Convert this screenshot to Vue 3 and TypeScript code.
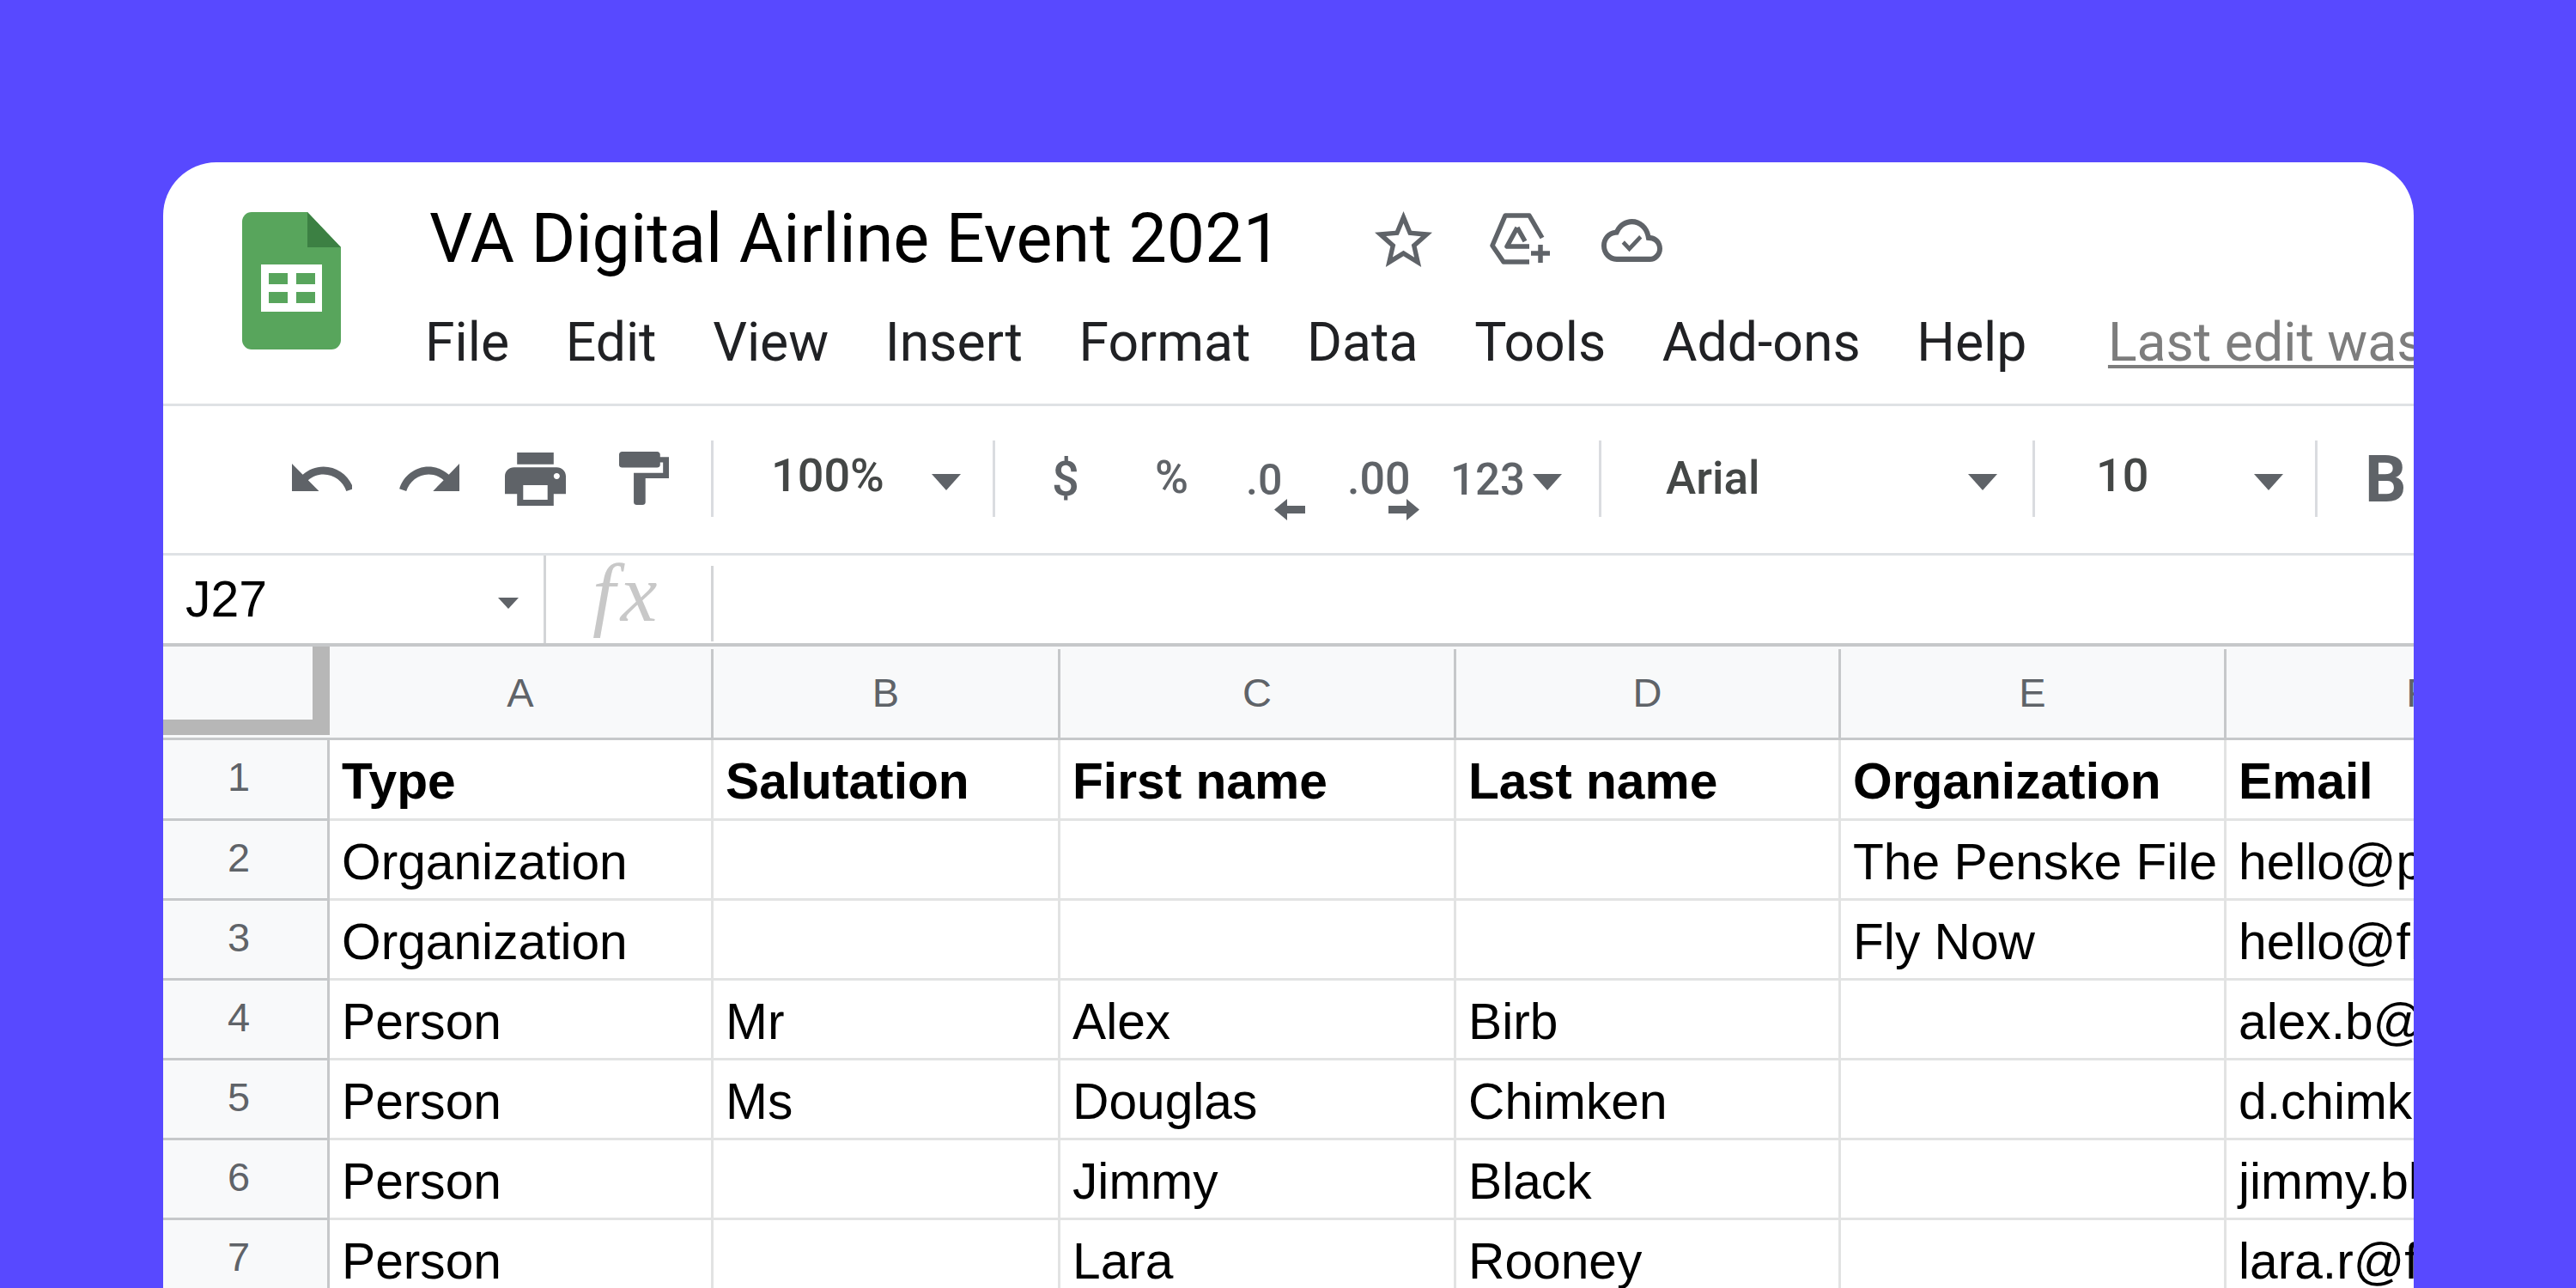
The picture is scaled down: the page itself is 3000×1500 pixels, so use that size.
<script setup lang="ts">
import { computed } from 'vue'

type Tool = {
  x: number
  kind: 'icon' | 'text' | 'caret' | 'sep'
  top?: number
  w?: number
  h?: number
  box?: string
  d?: string
  label?: string
  size?: number
  weight?: number
  color?: string
  arrow?: 'left' | 'right'
  arrowX?: number
}

const SHEET_TOP = 473

const rawTools: Tool[] = [
  { x: 340, kind: 'icon', top: 540, w: 70, h: 32, box: '2 7 20 9', d: 'M12.5 8c-2.65 0-5.05.99-6.9 2.6L2 7v9h9l-3.62-3.62c1.39-1.16 3.16-1.88 5.12-1.88 3.54 0 6.55 2.31 7.6 5.5l2.37-.78C21.08 11.03 17.15 8 12.5 8z' },
  { x: 465, kind: 'icon', top: 540, w: 70, h: 32, box: '1.5 7 20.5 9', d: 'M18.4 10.6C16.55 8.99 14.15 8 11.5 8c-4.65 0-8.58 3.03-9.96 7.22L3.9 16c1.05-3.19 4.05-5.5 7.6-5.5 1.95 0 3.73.72 5.12 1.88L13 16h9V7l-3.6 3.6z' },
  { x: 588, kind: 'icon', top: 527, w: 71, h: 62, box: '2 3 20 18', d: 'M19 8H5c-1.66 0-3 1.34-3 3v6h4v4h12v-4h4v-6c0-1.66-1.34-3-3-3zm-3 11H8v-5h8v5zm3-7c-.55 0-1-.45-1-1s.45-1 1-1 1 .45 1 1-.45 1-1 1zm-1-9H6v4h12V3z' },
  { x: 721, kind: 'icon', top: 526, w: 58, h: 62, box: '4 2 17 20', d: 'M18 4V3c0-.55-.45-1-1-1H5c-.55 0-1 .45-1 1v4c0 .55.45 1 1 1h12c.55 0 1-.45 1-1V6h1v4H9v11c0 .55.45 1 1 1h2c.55 0 1-.45 1-1v-9h8V4h-3z' },
  { x: 828, kind: 'sep' },
  { x: 898, kind: 'text', label: '100%', size: 54, top: 572, color: '#444746' },
  { x: 1085, kind: 'caret' },
  { x: 1156, kind: 'sep' },
  { x: 1225, kind: 'text', label: '$', size: 56, top: 577 },
  { x: 1345, kind: 'text', label: '%', size: 53, top: 575 },
  { x: 1451, kind: 'text', label: '.0', size: 50, top: 576, arrow: 'left', arrowX: 33 },
  { x: 1569, kind: 'text', label: '.00', size: 52, top: 576, arrow: 'right', arrowX: 48 },
  { x: 1689, kind: 'text', label: '123', size: 51, top: 576 },
  { x: 1785, kind: 'caret' },
  { x: 1862, kind: 'sep' },
  { x: 1940, kind: 'text', label: 'Arial', size: 53, top: 576, color: '#444746' },
  { x: 2292, kind: 'caret' },
  { x: 2367, kind: 'sep' },
  { x: 2441, kind: 'text', label: '10', size: 54, top: 572, color: '#444746' },
  { x: 2625, kind: 'caret' },
  { x: 2696, kind: 'sep' },
  { x: 2754, kind: 'text', label: 'B', size: 76, top: 584, weight: 700 },
]

// Every slot runs up to the start of the next one, so the row is laid out by flow.
const tools = computed(() =>
  rawTools.map((t, i) => {
    const next = rawTools[i + 1]
    const width = next ? next.x - t.x : 60
    let paddingTop = 0
    if (t.kind === 'text') paddingTop = (t.top as number) - SHEET_TOP - 0.841 * (t.size as number)
    else if (t.kind === 'icon') paddingTop = (t.top as number) - SHEET_TOP
    return { ...t, slot: { width: width + 'px', paddingTop: paddingTop + 'px' } }
  }),
)

const menu = ['File', 'Edit', 'View', 'Insert', 'Format', 'Data', 'Tools', 'Add-ons', 'Help']
const columns = ['A', 'B', 'C', 'D', 'E', 'F']
const rows: string[][] = [
  ['Type', 'Salutation', 'First name', 'Last name', 'Organization', 'Email'],
  ['Organization', '', '', '', 'The Penske File', 'hello@penskefile.com'],
  ['Organization', '', '', '', 'Fly Now', 'hello@flynow.com'],
  ['Person', 'Mr', 'Alex', 'Birb', '', 'alex.b@flynow.com'],
  ['Person', 'Ms', 'Douglas', 'Chimken', '', 'd.chimken@flynow.com'],
  ['Person', '', 'Jimmy', 'Black', '', 'jimmy.black@flynow.com'],
  ['Person', '', 'Lara', 'Rooney', '', 'lara.r@flynow.com'],
]
</script>

<template>
  <div class="page">
    <main class="card">
      <header class="head">
        <svg class="logo" viewBox="0 0 115 160" width="115" height="160">
          <path d="M11 0H76L115 41V149a11 11 0 0 1-11 11H11A11 11 0 0 1 0 149V11A11 11 0 0 1 11 0Z" fill="#58a55c" />
          <path d="M76 0V41H115Z" fill="#3c8043" />
          <rect x="22" y="61" width="71" height="55" fill="#fff" />
          <rect x="31" y="71" width="22" height="13" fill="#58a55c" />
          <rect x="63" y="71" width="22" height="13" fill="#58a55c" />
          <rect x="31" y="93" width="22" height="13" fill="#58a55c" />
          <rect x="63" y="93" width="22" height="13" fill="#58a55c" />
        </svg>
        <div class="head-text">
          <div class="title-row">
            <h1 class="title">VA Digital Airline Event 2021</h1>
            <svg class="star" viewBox="2 2 20 19" width="67" height="65" preserveAspectRatio="none">
              <path fill="#5f6368" d="M22 9.24l-7.19-.62L12 2 9.19 8.63 2 9.24l5.46 4.73L5.82 21 12 17.27 18.18 21l-1.63-7.03L22 9.24zM12 15.4l-3.76 2.27 1-4.28-3.32-2.88 4.38-.38L12 6.1l1.71 4.04 4.38.38-3.32 2.88 1 4.28L12 15.4z" />
            </svg>
            <svg class="drive" viewBox="0 0 70 60" width="70" height="60">
              <path fill="none" stroke="#5f6368" stroke-width="5.5" stroke-linejoin="round" d="M61 29L46 3H18L3 38L16 57H46M32 17L20 39H46M32 17L41 33" />
              <path fill="none" stroke="#5f6368" stroke-width="5.5" d="M48 47H70M59 37V58" />
            </svg>
            <svg class="cloud" viewBox="0 4 24 16" width="71" height="50" preserveAspectRatio="none">
              <path fill="#5f6368" d="M19.35 10.04C18.67 6.59 15.64 4 12 4 9.11 4 6.6 5.64 5.35 8.04 2.34 8.36 0 10.91 0 14c0 3.31 2.69 6 6 6h13c2.76 0 5-2.24 5-5 0-2.64-2.05-4.78-4.65-4.96zM19 18H6c-2.21 0-4-1.79-4-4 0-2.05 1.53-3.76 3.56-3.97l1.07-.11.5-.95C8.08 7.14 9.94 6 12 6c2.62 0 4.88 1.86 5.39 4.43l.3 1.5 1.53.11c1.56.1 2.78 1.41 2.78 2.96 0 1.65-1.35 3-3 3z" />
              <path fill="#5f6368" d="M11 16.2l-3-3 1.1-1.1 1.9 1.9 3.9-3.9 1.1 1.1z" />
            </svg>
          </div>
          <nav class="menu">
            <span v-for="m in menu" :key="m" class="menu-item">{{ m }}</span>
            <span class="last-edit">Last edit was</span>
          </nav>
        </div>
      </header>

      <section class="toolbar">
        <div v-for="(t, i) in tools" :key="i" class="slot" :style="t.slot">
          <svg v-if="t.kind === 'icon'" :viewBox="t.box" :width="t.w" :height="t.h" preserveAspectRatio="none">
            <path fill="#5f6368" :d="t.d" />
          </svg>
          <span
            v-else-if="t.kind === 'text'"
            class="tool-text"
            :style="{ fontSize: t.size + 'px', fontWeight: t.weight ?? 500, color: t.color ?? '#5f6368' }"
          >
            {{ t.label }}
            <svg
              v-if="t.arrow"
              class="dec-arrow"
              :style="{ left: t.arrowX + 'px' }"
              viewBox="0 0 36 25"
              width="36"
              height="25"
            >
              <path v-if="t.arrow === 'left'" fill="#5f6368" d="M0 12.5L15 0V8H36V17H15V25Z" />
              <path v-else fill="#5f6368" d="M36 12.5L21 0V8H0V17H21V25Z" />
            </svg>
          </span>
          <i v-else-if="t.kind === 'caret'" class="caret"></i>
          <i v-else class="sep"></i>
        </div>
      </section>

      <section class="formula">
        <div class="name-box">
          <span class="name">J27</span>
          <i class="name-caret"></i>
        </div>
        <div class="fx-box"><span class="fx">fx</span></div>
      </section>

      <section class="sheet">
        <div class="corner"><div class="corner-inner"></div></div>
        <div v-for="c in columns" :key="c" class="col-head">{{ c }}</div>
        <template v-for="(row, r) in rows" :key="r">
          <div class="row-head">{{ r + 1 }}</div>
          <div v-for="(cell, c) in row" :key="c" class="cell" :class="{ bold: r === 0 }">
            {{ cell }}
          </div>
        </template>
      </section>
    </main>
  </div>
</template>

<style>
html,
body {
  margin: 0;
  background: #5849ff;
}
</style>

<style scoped>
.page {
  width: 3000px;
  height: 1500px;
  overflow: hidden;
  box-sizing: border-box;
  padding: 189px 0 0 190px;
  background: #5849ff;
}
.card {
  width: 2621px;
  height: 1311px;
  overflow: hidden;
  background: #fff;
  border-radius: 62px 62px 0 0;
}
.head {
  display: flex;
  height: 284px;
  box-sizing: border-box;
  border-bottom: 3px solid #dfe2e5;
  padding-left: 92px;
}
.logo {
  margin-top: 58px;
  flex: none;
}
.head-text {
  margin-left: 98px;
  margin-top: 49px;
}
.title-row {
  display: flex;
  align-items: flex-start;
  height: 80px;
}
.title {
  margin: 0 0 0 5px;
  font: 400 79px/80px Roboto, "Liberation Sans", sans-serif;
  color: #000;
  white-space: nowrap;
}
.star {
  margin: 8px 0 0 109px;
  flex: none;
}
.drive {
  margin: 10px 0 0 67px;
  flex: none;
}
.cloud {
  margin: 17px 0 0 60px;
  flex: none;
}
.menu {
  display: flex;
  margin-top: 50px;
  gap: 65.6px;
  font: 400 62.5px/62px Roboto, "Liberation Sans", sans-serif;
  color: #202124;
  white-space: nowrap;
}
.last-edit {
  margin-left: 29px;
  color: #7d7d7d;
  text-decoration: underline;
  text-decoration-thickness: 4px;
  text-underline-offset: 5px;
}
.toolbar {
  display: flex;
  height: 174px;
  box-sizing: border-box;
  border-bottom: 3px solid #dfe2e5;
  padding-left: 150px;
  font-family: Roboto, "Liberation Sans", sans-serif;
}
.slot {
  flex: none;
  box-sizing: border-box;
  height: 170px;
}
.slot svg {
  display: block;
}
.tool-text {
  display: block;
  position: relative;
  line-height: 1;
  white-space: nowrap;
  width: max-content;
}
.tool-text .dec-arrow {
  position: absolute;
  top: 100%;
  margin-top: -3px;
}
.caret {
  display: block;
  width: 0;
  height: 0;
  margin-top: 79px;
  border-left: 17px solid transparent;
  border-right: 17px solid transparent;
  border-top: 19px solid #5f6368;
}
.sep {
  display: block;
  width: 3px;
  height: 89px;
  margin-top: 40px;
  background: #dadce0;
}
.formula {
  display: flex;
  height: 106px;
  box-sizing: border-box;
  border-bottom: 4px solid #c6c8ca;
}
.name-box {
  display: flex;
  align-items: center;
  width: 446px;
  height: 102px;
  box-sizing: border-box;
  padding-left: 26px;
  border-right: 3px solid #d3d5d7;
  flex: none;
}
.name {
  font: 400 59px/1 "Liberation Sans", Arial, sans-serif;
  color: #000;
  padding-top: 1px;
}
.name-caret {
  margin: 8px 0 0 269px;
  width: 0;
  height: 0;
  border-left: 12px solid transparent;
  border-right: 12px solid transparent;
  border-top: 13px solid #5f6368;
}
.fx-box {
  width: 195px;
  height: 88px;
  margin-top: 12px;
  box-sizing: border-box;
  border-right: 3px solid #d3d5d7;
  padding-left: 54px;
  flex: none;
}
.fx {
  display: block;
  margin-top: -8px;
  font: italic 400 96px/80px "Liberation Serif", serif;
  letter-spacing: 6px;
  color: #c8c8c8;
}
.sheet {
  display: grid;
  grid-template-columns: 194px 447px 404px 461px 448px 449px 450px;
  grid-template-rows: 109px 94px repeat(5, 93px) 93px;
  font-family: "Liberation Sans", Arial, sans-serif;
}
.corner {
  background: #f8f9fa;
  border-bottom: 3px solid #c6c8ca;
  box-sizing: border-box;
}
.corner-inner {
  width: 194px;
  height: 103px;
  box-sizing: border-box;
  border-right: 20px solid #b7b7b7;
  border-bottom: 18px solid #b7b7b7;
}
.col-head {
  display: flex;
  align-items: center;
  justify-content: center;
  box-sizing: border-box;
  background: linear-gradient(#c6c8ca, #c6c8ca) right bottom / 3px 103px no-repeat #f8f9fa;
  border-bottom: 3px solid #c6c8ca;
  padding: 1px 3px 0 0;
  font-size: 47px;
  line-height: 1;
  color: #5f6368;
}
.row-head {
  display: flex;
  align-items: center;
  justify-content: center;
  box-sizing: border-box;
  background: #f8f9fa;
  border-right: 3px solid #c6c8ca;
  border-bottom: 3px solid #c6c8ca;
  padding: 0 15px 6px 0;
  font-size: 47px;
  line-height: 1;
  color: #5f6368;
}
.cell {
  display: flex;
  align-items: center;
  box-sizing: border-box;
  overflow: hidden;
  white-space: nowrap;
  border-right: 3px solid #e2e3e3;
  border-bottom: 3px solid #e2e3e3;
  padding: 6px 0 0 14px;
  font-size: 58.7px;
  line-height: 1;
  color: #000;
}
.bold {
  font-weight: 700;
}
</style>
